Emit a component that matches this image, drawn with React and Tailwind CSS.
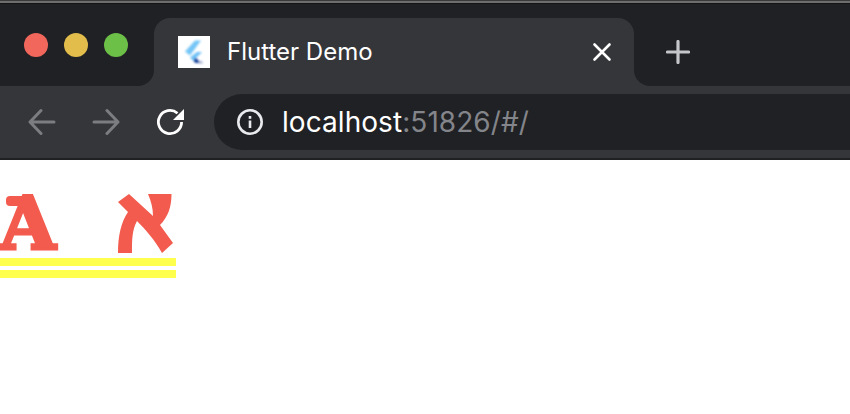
const UI = '"Inter", "Liberation Sans", sans-serif';
const RED = '#f35b4e';

function Flutter() {
  return (
    <div className="w-8 h-8 bg-white shrink-0">
      <svg width="32" height="32" viewBox="0 0 32 32">
        <g style={{ filter: 'blur(0.8px)' }}>
          <path d="M17 4.500h6L12 19.500 7 15.500z" fill="#74c5f6" />
          <path d="M19 16h5l-6 6-2.500 3-3.500-3.500z" fill="#6cbff5" />
          <path d="M15.500 25l2.500-3 3.500 3.500-1 1.500h-3z" fill="#123a94" />
          <path d="M20.500 25h3.500l1 2.500h-4.500z" fill="#a4b0d0" />
        </g>
      </svg>
    </div>
  );
}

export default function App() {
  return (
    <div className="w-[850px] h-[414px] bg-white overflow-hidden flex flex-col" style={{ fontFamily: UI }}>
      <div className="h-[160px] bg-[#35363a] flex flex-col shrink-0">
        <div className="h-[4px] bg-[#151515] border-t border-[#3a3a3a] shrink-0">
          <div className="h-[2px] bg-[#6e6e6e]" />
        </div>
        <div className="h-[82px] flex">
          <div className="w-[154px] h-full bg-[#202124] rounded-br-[16px] flex items-start pl-6 pt-[29px] gap-[16px]">
            <span className="w-6 h-6 rounded-full bg-[#f2675c]" />
            <span className="w-6 h-6 rounded-full bg-[#e2bd4b]" />
            <span className="w-6 h-6 rounded-full bg-[#6cbf47]" />
          </div>
          <div className="w-[480px] h-full flex flex-col bg-[#202124]">
            <div className="h-[14px]" />
            <div className="flex-1 bg-[#35363a] rounded-t-[16px] flex items-center pl-6 pr-[22px]">
              <Flutter />
              <span className="ml-[17px] text-[24px] leading-none text-white">Flutter Demo</span>
              <svg className="ml-auto" width="20" height="20" viewBox="0 0 20 20" fill="none" stroke="#ffffff" strokeWidth="2.600" strokeLinecap="round">
                <path d="M2.500 2.500l15 15M17.500 2.500l-15 15" />
              </svg>
            </div>
          </div>
          <div className="flex-1 h-full bg-[#202124] rounded-bl-[16px] flex items-start pl-[32px] pt-[36px]">
            <svg width="24" height="24" viewBox="0 0 24 24" fill="none" stroke="#c4c6ca" strokeWidth="3.200" strokeLinecap="round">
              <path d="M12 1.500v21M1.500 12h21" />
            </svg>
          </div>
        </div>
        <div className="h-[74px] flex items-center border-b-[2px] border-[#1f2021] pl-[28px]">
          <svg width="28" height="28" viewBox="0 0 28 28" fill="none" stroke="#7c7d80" strokeWidth="3" strokeLinecap="round" strokeLinejoin="round">
            <path d="M26 14H2M13 2.500L2 14l11 11.500" />
          </svg>
          <svg className="ml-[36px]" width="28" height="28" viewBox="0 0 28 28" fill="none" stroke="#7c7d80" strokeWidth="3" strokeLinecap="round" strokeLinejoin="round">
            <path d="M2 14h24M15 2.500L26 14 15 25.500" />
          </svg>
          <svg className="ml-[37px]" width="28" height="28" viewBox="0 0 28 28">
            <path d="M24.600 14A11.600 11.600 0 1 1 20.500 5.200" fill="none" stroke="#ffffff" strokeWidth="2.800" />
            <path d="M27 1v11H16z" fill="#ffffff" />
          </svg>
          <div className="ml-[29px] flex-1 h-[56px] bg-[#202124] rounded-l-[28px] flex items-center pl-[22px]">
            <svg width="28" height="28" viewBox="0 0 28 28" fill="none">
              <circle cx="14" cy="14" r="11.700" stroke="#e8eaed" strokeWidth="2.600" />
              <rect x="12.700" y="12.500" width="2.600" height="7.500" fill="#e8eaed" />
              <rect x="12.700" y="8" width="2.600" height="2.800" fill="#e8eaed" />
            </svg>
            <span className="ml-[18px] text-[28px] tracking-[0.06px] leading-none text-white">
              localhost<span className="text-[#83858a]">:51826/#/</span>
            </span>
          </div>
        </div>
      </div>
      <div className="pt-[34px]">
        <div className="w-[176px] flex items-end justify-between h-[60px]">
          <div className="relative w-[57px] h-[60px]">
            <span
              className="block text-[72px] leading-[60px] font-bold [-webkit-text-stroke:3px_#f35b4e]"
              style={{ fontFamily: '"DejaVu Serif", serif', color: RED }}
            >
              A
            </span>
            <span className="absolute left-[6px] top-[2px] w-[27px] h-[10px] rounded-[4px] bg-[#f35b4e]" />
          </div>
          <svg className="mr-[1px]" width="58" height="60" viewBox="0 0 58 60">
            <path d="M1 8L12 0 36 22C36 14 34 7 31 0H54.500C54.500 13 51 23 43 31L56 49 45 59C38 46 28 35 20 27 15 36 15 46 15 59H1C1 42 4 28 11 18z" fill={RED} />
          </svg>
        </div>
        <div className="w-[176px] mt-[4px] border-y-[8px] border-[#ffff4d] h-[20px]" />
      </div>
    </div>
  );
}
